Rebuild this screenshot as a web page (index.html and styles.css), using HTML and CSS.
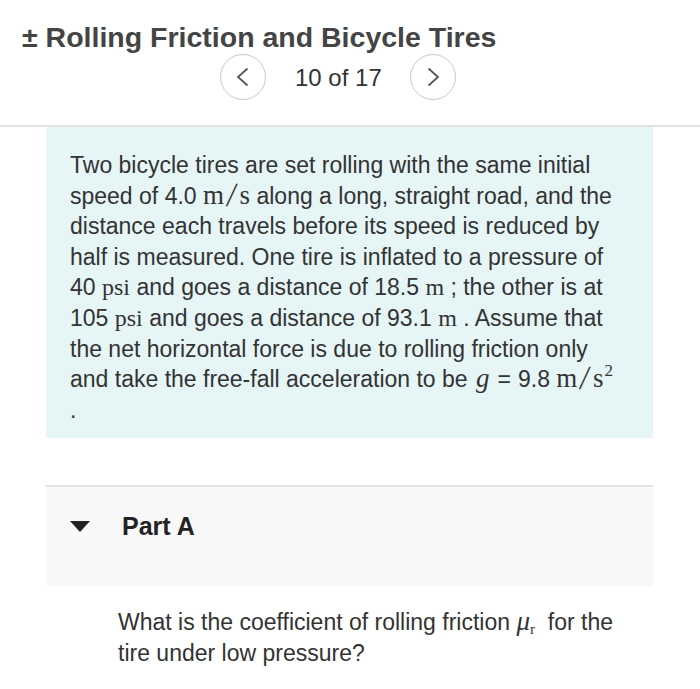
FILE: index.html
```html
<!DOCTYPE html>
<html>
<head>
<meta charset="utf-8">
<link rel="stylesheet" href="styles.css">
</head>
<body>
<header class="top">
  <h1 class="title">± Rolling Friction and Bicycle Tires</h1>
  <nav class="pager">
    <span class="circ"><svg width="20" height="20" viewBox="0 0 20 20"><path d="M14.5 1.5 L5 10 L14.5 18.5" fill="none" stroke="#555" stroke-width="1.8"/></svg></span>
    <span class="count">10 of 17</span>
    <span class="circ"><svg width="20" height="20" viewBox="0 0 20 20"><path d="M5.5 1.5 L15 10 L5.5 18.5" fill="none" stroke="#555" stroke-width="1.8"/></svg></span>
  </nav>
</header>
<main class="content">
  <section class="intro">
    <p>Two bicycle tires are set rolling with the same initial speed of 4.0&nbsp;<span class="m big">m<span class="sl">/</span>s</span> along a long, straight road, and the distance each travels before its speed is reduced by half is measured. One tire is inflated to a pressure of 40 <span class="m">psi</span> and goes a distance of 18.5 <span class="m">m</span> ; the other is at 105 <span class="m">psi</span> and goes a distance of 93.1 <span class="m">m</span> . Assume that the net horizontal force is due to rolling friction only and take the free-fall acceleration to be <span class="m big g"><i>g</i></span><span class="eq">=</span>9.8 <span class="m big">m<span class="sl">/</span>s<sup>2</sup></span></p>
    <p>.</p>
  </section>
  <section class="part">
    <div class="part-head">
      <span class="tri"></span>
      <span class="part-title">Part A</span>
    </div>
    <p class="question">What is the coefficient of rolling friction <span class="m big"><i>μ</i><sub>r</sub></span>&nbsp; for the tire under low pressure?</p>
  </section>
</main>
</body>
</html>
```
FILE: styles.css
```css
html, body {
  margin: 0;
  padding: 0;
  background: #fff;
  font-family: "Liberation Sans", Arial, sans-serif;
  color: #333;
}
.top {
  padding: 17px 0 0 0;
  height: 108px;
  border-bottom: 2px solid #e2e2e2;
}
.title {
  margin: 0 0 0 22px;
  font-size: 28.5px;
  line-height: 40px;
  font-weight: bold;
  color: #444;
}
.pager {
  display: flex;
  align-items: center;
  margin: -3px 0 0 220px;
}
.circ {
  width: 44px;
  height: 44px;
  border: 1.5px solid #c8c8c8;
  border-radius: 50%;
  display: flex;
  align-items: center;
  justify-content: center;
}
.count {
  font-size: 24px;
  margin: 2px 28px 0 29px;
  color: #333;
}
.content {
  margin: 0 47px 0 46px;
}
.intro {
  background: #e6f5f6;
  padding: 23px 24px 13px 24px;
  font-size: 23px;
  line-height: 30.6px;
}
.intro p {
  margin: 0;
}
.m {
  font-family: "Liberation Serif", "DejaVu Serif", serif;
  font-size: 24px;
  line-height: 0;
}
.m.big {
  font-size: 27px;
}
.m.g {
  margin-left: 2px;
}
.sl {
  display: inline-block;
  margin: 0 4px;
  transform: scale(1.2, 1.25) skewX(-8deg);
}
.eq {
  margin: 0 7px 0 8px;
}
.m sup {
  font-size: 17px;
  line-height: 0;
  vertical-align: 11px;
  margin-left: 1px;
}
.m sub {
  font-size: 15px;
  line-height: 0;
  vertical-align: -4px;
}
.part {
  margin-top: 47px;
}
.part-head {
  background: #f8f8f8;
  border-top: 2px solid #e4e4e4;
  box-sizing: border-box;
  height: 101px;
  display: flex;
  align-items: flex-start;
  padding: 24px 0 0 24px;
}
.tri {
  width: 0;
  height: 0;
  border-left: 10px solid transparent;
  border-right: 10px solid transparent;
  border-top: 11px solid #222;
  margin: 10px 32px 0 0;
}
.part-title {
  font-size: 25px;
  line-height: 30px;
  font-weight: bold;
  color: #222;
}
.question {
  margin: 21px 24px 0 72px;
  font-size: 23px;
  line-height: 31px;
}
```
